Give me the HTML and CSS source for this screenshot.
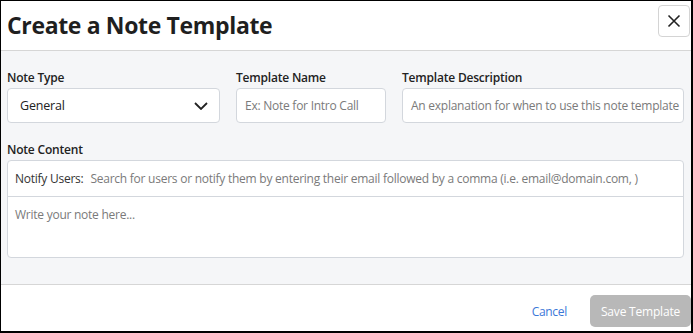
FILE: index.html
```html
<!DOCTYPE html>
<html>
<head>
<meta charset="utf-8">
<link rel="stylesheet" href="styles.css">
</head>
<body>
<div class="dialog">
  <div class="header">
    <h1 class="title">Create a Note Template</h1>
    <button class="close" aria-label="Close">
      <svg width="14" height="14" viewBox="0 0 14 14"><path d="M1.5 1.5 L12.5 12.5 M12.5 1.5 L1.5 12.5" stroke="#222" stroke-width="1.6" fill="none"/></svg>
    </button>
  </div>
  <div class="body">
    <div class="fields">
      <div class="field">
        <label class="label">Note Type</label>
        <div class="control select">
          <span class="value">General</span>
          <svg class="chev" width="14" height="8" viewBox="0 0 14 8"><path d="M1 1 L7 7 L13 1" stroke="#222" stroke-width="1.8" fill="none"/></svg>
        </div>
      </div>
      <div class="field">
        <label class="label">Template Name</label>
        <div class="control"><span class="ph">Ex: Note for Intro Call</span></div>
      </div>
      <div class="field">
        <label class="label">Template Description</label>
        <div class="control"><span class="ph">An explanation for when to use this note template</span></div>
      </div>
    </div>
    <div class="content-field">
      <label class="label">Note Content</label>
      <div class="content-box">
        <div class="notify"><span class="notify-label">Notify Users:</span><span class="ph">Search for users or notify them by entering their email followed by a comma (i.e. email@domain.com, )</span></div>
        <div class="note"><span class="ph">Write your note here...</span></div>
      </div>
    </div>
  </div>
  <div class="footer">
    <a class="cancel">Cancel</a>
    <button class="save">Save Template</button>
  </div>
</div>
</body>
</html>
```
FILE: styles.css
```css
* { box-sizing: border-box; }
html, body { margin: 0; padding: 0; background: #fff; }
body { font-family: "Open Sans", "Noto Sans", sans-serif; color: #222; }
.dialog {
  width: 693px; height: 333px;
  border-top: 1px solid #000; border-left: 1px solid #000;
  border-right: 2px solid #000; border-bottom: 2px solid #000;
  display: flex; flex-direction: column;
  overflow: hidden;
}
.header {
  height: 50px; flex: none;
  display: flex; justify-content: space-between; align-items: flex-start;
  padding: 4px 1px 0 6px;
  border-bottom: 1px solid #d6d6d6;
  background: #fff;
}
.title {
  margin: 0; font-size: 23px; font-weight: 700; line-height: 40px;
  color: #1f1f1f; letter-spacing: -0.35px;
}
.close {
  width: 32px; height: 32px; padding: 0; margin: 0;
  border: 1px solid #d4d4d4; border-radius: 4px; background: #fff;
  display: flex; align-items: center; justify-content: center;
}
.body {
  flex: none; height: 234px;
  background: #f5f6f8;
  border-bottom: 1px solid #d6d6d6;
  padding: 19px 8px 0 6px;
}
.fields {
  display: grid; grid-template-columns: 213px 150px 282px; column-gap: 16px;
}
.field { display: flex; flex-direction: column; }
.label {
  display: block; font-size: 12px; font-weight: 600; line-height: 16px;
  color: #222; margin-bottom: 2px; letter-spacing: -0.2px;
}
.control {
  height: 35px; background: #fff;
  border: 1px solid #d3d7dd; border-radius: 4px;
  display: flex; align-items: center; padding: 0 8px;
  font-size: 12px; white-space: nowrap; overflow: hidden;
}
.select { justify-content: space-between; padding: 0 11px 0 12px; }
.value { color: #222; font-size: 12.5px; letter-spacing: -0.2px; }
.ph { color: #7a7a7a; letter-spacing: -0.25px; }
.chev { display: block; }
.content-field { margin-top: 19px; }
.content-box {
  background: #fff; border: 1px solid #d3d7dd; border-radius: 4px;
  width: 677px; height: 98px;
  display: flex; flex-direction: column;
}
.notify {
  height: 36px; flex: none; border-bottom: 1px solid #d3d7dd;
  display: flex; align-items: center; padding: 0 7px;
  font-size: 12px; white-space: nowrap; overflow: hidden;
}
.notify-label { color: #333; margin-right: 7px; letter-spacing: -0.25px; }
.note { padding: 9px 7px; font-size: 12px; }
.footer {
  flex: 1; background: #fff;
  display: flex; justify-content: flex-end; align-items: center;
  padding: 6px 0 0 0;
}
.cancel { color: #3b78d8; font-size: 12px; margin-right: 23px; letter-spacing: -0.3px; }
.save {
  width: 101px; height: 32px; border: none; border-radius: 5px;
  background: #b8b8b8; color: #fff; font-family: inherit;
  font-size: 12px; letter-spacing: -0.2px; padding: 0;
}
```
